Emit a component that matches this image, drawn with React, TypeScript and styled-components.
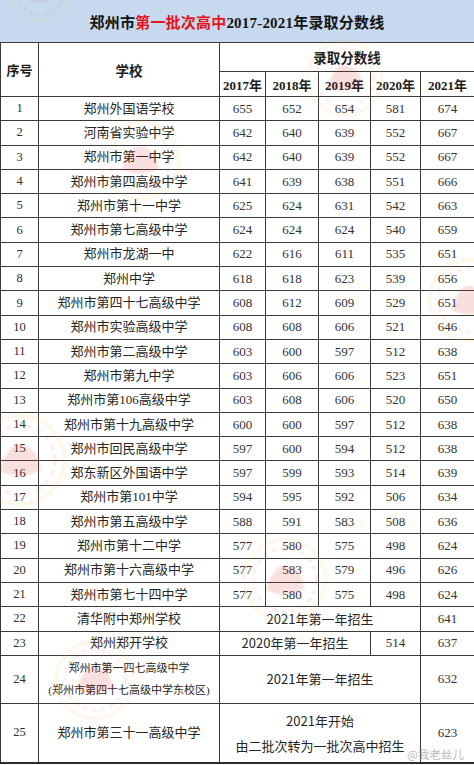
import React from 'react';
import styled, { createGlobalStyle } from 'styled-components';

const SERIF = `"Liberation Serif", "Noto Sans CJK SC", serif`;
const SANS = `"Noto Sans CJK SC", "Noto Sans", sans-serif`;
const LINE = '#3a3a3a';

const GlobalStyle = createGlobalStyle`
  html, body {
    margin: 0;
    padding: 0;
    background: #fff;
  }
  body {
    font-family: ${SANS};
  }
`;

/**
 * SHEET
 */

const Sheet = styled.div`
  position: relative;
  width: 474px;
  height: 765px;
  overflow: hidden;
  background: #fff;
`;

const TitleBar = styled.div`
  height: 42px;
  display: flex;
  align-items: center;
  justify-content: center;
  background: #c7d9ee;
`;

const Title = styled.h1`
  margin: 0;
  font-family: ${SERIF};
  font-size: 15px;
  font-weight: bold;
  color: #151515;
  letter-spacing: 0.2px;
`;

const Red = styled.span`
  color: #e3141c;
`;

/**
 * TABLE
 */

const Table = styled.table`
  width: 474px;
  table-layout: fixed;
  border-collapse: collapse;
  border-top: 1px solid ${LINE};
  border-bottom: 2px solid #2c2c2c;
`;

const Row = styled.tr<{ $h: number }>`
  height: ${p => p.$h}px;
`;

const Cell = styled.td`
  border: 1px solid ${LINE};
  padding: 0;
  text-align: center;
  vertical-align: middle;
  color: #333;
`;

const HeadCell = styled(Cell).attrs({ as: 'th' })<{ $size?: number }>`
  font-family: ${SERIF};
  font-size: ${p => p.$size || 13.5}px;
  font-weight: bold;
  color: #1c1c1c;
  white-space: nowrap;
`;

const IndexCell = styled(Cell)`
  font-family: ${SERIF};
  font-size: 12.5px;
  color: #2e2e2e;
`;

const SchoolCell = styled(Cell)<{ $small?: boolean }>`
  font-family: ${SERIF};
  font-size: ${p => (p.$small ? 11 : 13)}px;
  line-height: ${p => (p.$small ? 22 : 16)}px;
  color: #262626;
  white-space: nowrap;
`;

const ScoreCell = styled(Cell)`
  font-family: ${SERIF};
  font-size: 13px;
  color: #333;
`;

const NoteCell = styled(Cell)<{ $lh?: number }>`
  font-family: ${SANS};
  font-size: 13px;
  line-height: ${p => p.$lh || 16}px;
  color: #262626;
  white-space: nowrap;
`;

const Line = styled.div`
  display: block;
`;

/**
 * WATERMARKS
 */

const Stamp = styled.svg<{ $x: number; $y: number; $r: number }>`
  position: absolute;
  left: ${p => p.$x - p.$r}px;
  top: ${p => p.$y - p.$r}px;
  width: ${p => p.$r * 2}px;
  height: ${p => p.$r * 2}px;
  pointer-events: none;
  opacity: 0.14;
  filter: blur(0.8px);
`;

const Credit = styled.div`
  position: absolute;
  right: 10px;
  bottom: 4px;
  font-family: ${SANS};
  font-size: 11.5px;
  line-height: 14px;
  color: rgba(165, 165, 165, 0.8);
  pointer-events: none;
`;

function Watermark({ x, y, r }: { x: number; y: number; r: number }) {
  return (
    <Stamp $x={x} $y={y} $r={r} viewBox="0 0 100 100">
      <circle cx="50" cy="50" r="46" fill="none" stroke="#f0c060" strokeWidth="4" />
      <circle cx="50" cy="50" r="36" fill="none" stroke="#e25555" strokeWidth="3" strokeDasharray="6 5" />
      <path d="M28 62 Q38 30 52 34 Q70 38 72 60 Q54 72 28 62 Z" fill="#d92b2b" />
    </Stamp>
  );
}

type Scores = [number, number, number, number, number];

const rows: { school: string; s: Scores }[] = [
  { school: '郑州外国语学校', s: [655, 652, 654, 581, 674] },
  { school: '河南省实验中学', s: [642, 640, 639, 552, 667] },
  { school: '郑州市第一中学', s: [642, 640, 639, 552, 667] },
  { school: '郑州市第四高级中学', s: [641, 639, 638, 551, 666] },
  { school: '郑州市第十一中学', s: [625, 624, 631, 542, 663] },
  { school: '郑州市第七高级中学', s: [624, 624, 624, 540, 659] },
  { school: '郑州市龙湖一中', s: [622, 616, 611, 535, 651] },
  { school: '郑州中学', s: [618, 618, 623, 539, 656] },
  { school: '郑州市第四十七高级中学', s: [608, 612, 609, 529, 651] },
  { school: '郑州市实验高级中学', s: [608, 608, 606, 521, 646] },
  { school: '郑州市第二高级中学', s: [603, 600, 597, 512, 638] },
  { school: '郑州市第九中学', s: [603, 606, 606, 523, 651] },
  { school: '郑州市第106高级中学', s: [603, 608, 606, 520, 650] },
  { school: '郑州市第十九高级中学', s: [600, 600, 597, 512, 638] },
  { school: '郑州市回民高级中学', s: [597, 600, 594, 512, 638] },
  { school: '郑东新区外国语中学', s: [597, 599, 593, 514, 639] },
  { school: '郑州市第101中学', s: [594, 595, 592, 506, 634] },
  { school: '郑州市第五高级中学', s: [588, 591, 583, 508, 636] },
  { school: '郑州市第十二中学', s: [577, 580, 575, 498, 624] },
  { school: '郑州市第十六高级中学', s: [577, 583, 579, 496, 626] },
  { school: '郑州市第七十四中学', s: [577, 580, 575, 498, 624] },
];

const ROW_H = 24.3;
const years = ['2017年', '2018年', '2019年', '2020年', '2021年'];
const widths = [38, 181, 46, 53, 52, 50, 54];

export default function App() {
  return (
    <Sheet>
      <GlobalStyle />
      <TitleBar>
        <Title>
          郑州市<Red>第一批次高中</Red>2017-2021年录取分数线
        </Title>
      </TitleBar>
      <Table>
        <colgroup>
          {widths.map((w, i) => (
            <col key={i} style={{ width: w }} />
          ))}
        </colgroup>
        <thead>
          <Row $h={29}>
            <HeadCell rowSpan={2} $size={13}>序号</HeadCell>
            <HeadCell rowSpan={2} $size={13.5}>学校</HeadCell>
            <HeadCell colSpan={5}>录取分数线</HeadCell>
          </Row>
          <Row $h={25}>
            {years.map(y => (
              <HeadCell key={y} $size={13}>{y}</HeadCell>
            ))}
          </Row>
        </thead>
        <tbody>
          {rows.map((r, i) => (
            <Row key={i} $h={ROW_H}>
              <IndexCell>{i + 1}</IndexCell>
              <SchoolCell>{r.school}</SchoolCell>
              {r.s.map((v, j) => (
                <ScoreCell key={j}>{v}</ScoreCell>
              ))}
            </Row>
          ))}
          <Row $h={ROW_H}>
            <IndexCell>22</IndexCell>
            <SchoolCell>清华附中郑州学校</SchoolCell>
            <NoteCell colSpan={4}>2021年第一年招生</NoteCell>
            <ScoreCell>641</ScoreCell>
          </Row>
          <Row $h={24}>
            <IndexCell>23</IndexCell>
            <SchoolCell>郑州郑开学校</SchoolCell>
            <NoteCell colSpan={3}>2020年第一年招生</NoteCell>
            <ScoreCell>514</ScoreCell>
            <ScoreCell>637</ScoreCell>
          </Row>
          <Row $h={48}>
            <IndexCell>24</IndexCell>
            <SchoolCell $small>
              <Line>郑州市第一四七高级中学</Line>
              <Line>(郑州市第四十七高级中学东校区)</Line>
            </SchoolCell>
            <NoteCell colSpan={4}>2021年第一年招生</NoteCell>
            <ScoreCell>632</ScoreCell>
          </Row>
          <Row $h={60}>
            <IndexCell>25</IndexCell>
            <SchoolCell>郑州市第三十一高级中学</SchoolCell>
            <NoteCell colSpan={4} $lh={25}>
              <Line>2021年开始</Line>
              <Line>由二批次转为一批次高中招生</Line>
            </NoteCell>
            <ScoreCell>623</ScoreCell>
          </Row>
        </tbody>
      </Table>
      <Watermark x={40} y={-10} r={34} />
      <Watermark x={345} y={78} r={40} />
      <Watermark x={140} y={160} r={42} />
      <Watermark x={470} y={300} r={44} />
      <Watermark x={20} y={460} r={48} />
      <Watermark x={285} y={580} r={44} />
      <Watermark x={95} y={680} r={42} />
      <Credit>@我老丝儿</Credit>
    </Sheet>
  );
}
